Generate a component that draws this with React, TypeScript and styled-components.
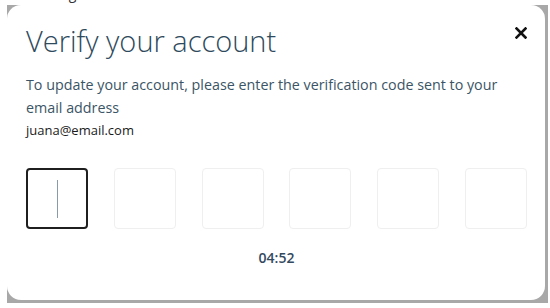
import styled, { createGlobalStyle } from 'styled-components';

const GlobalStyle = createGlobalStyle`
  html, body {
    margin: 0;
    padding: 0;
    background: #ffffff;
  }
  body {
    font-family: "Open Sans", "Noto Sans", sans-serif;
  }
`;

const Page = styled.div`
  width: 550px;
  height: 308px;
  overflow: hidden;
`;

// only the descender of the heading behind the dialog peeks out
const TopStrip = styled.div`
  height: 5px;
  overflow: hidden;
  padding-left: 31px;
  font-size: 14px;
  line-height: 14px;
  color: #333;
`;

const ClippedText = styled.div`
  margin-top: -13px;
`;

const Frame = styled.div`
  margin-left: 7px;
  width: 538px;
  background: #a8a8a8;
  padding: 0 3px 3px 0;
`;

const Card = styled.div`
  height: 295px;
  background: #ffffff;
  border-radius: 14px;
  padding: 16px 18px 0 19px;
  box-sizing: border-box;
  display: flex;
  flex-direction: column;
`;

const Header = styled.div`
  display: flex;
  justify-content: space-between;
  align-items: flex-start;
`;

const Title = styled.h1`
  margin: 0;
  font-size: 29px;
  font-weight: 300;
  line-height: 40px;
  color: #2e4a5c;
`;

const CloseButton = styled.button`
  border: none;
  background: none;
  padding: 0;
  margin: 6px 0 0 0;
  cursor: pointer;
  color: #111;
  display: flex;
`;

const Message = styled.p`
  margin: 12px 0 0 0;
  font-size: 14.3px;
  line-height: 23px;
  color: #3b5566;
`;

const Email = styled.div`
  font-size: 13px;
  line-height: 22px;
  color: #1a1a1a;
`;

const CodeRow = styled.div`
  margin-top: 27px;
  display: flex;
  justify-content: space-between;
`;

const CodeBox = styled.div<{ $active?: boolean }>`
  width: 62px;
  height: 61px;
  box-sizing: border-box;
  border-radius: 4px;
  border: ${({ $active }) => ($active ? '2px solid #1f1f1f' : '1px solid #efefef')};
  display: flex;
  align-items: center;
  justify-content: center;
`;

const Caret = styled.div`
  width: 1px;
  height: 38px;
  background: #8a9aaa;
`;

const Timer = styled.div`
  margin-top: 19px;
  text-align: center;
  font-size: 14px;
  font-weight: 600;
  line-height: 20px;
  color: #34495e;
`;

export default function App() {
  const slots = [0, 1, 2, 3, 4, 5];
  return (
    <Page>
      <GlobalStyle />
      <TopStrip>
        <ClippedText>Settings</ClippedText>
      </TopStrip>
      <Frame>
        <Card>
          <Header>
            <Title>Verify your account</Title>
            <CloseButton type="button" aria-label="Close">
              <svg width="12" height="12" viewBox="0 0 12 12">
                <path d="M1.5 1.5 L10.5 10.5 M10.5 1.5 L1.5 10.5" stroke="currentColor" strokeWidth="2.6" strokeLinecap="square" />
              </svg>
            </CloseButton>
          </Header>
          <Message>
            To update your account, please enter the verification code sent to your email address
          </Message>
          <Email>juana@email.com</Email>
          <CodeRow>
            {slots.map((i) => (
              <CodeBox key={i} $active={i === 0}>
                {i === 0 && <Caret />}
              </CodeBox>
            ))}
          </CodeRow>
          <Timer>04:52</Timer>
        </Card>
      </Frame>
    </Page>
  );
}
